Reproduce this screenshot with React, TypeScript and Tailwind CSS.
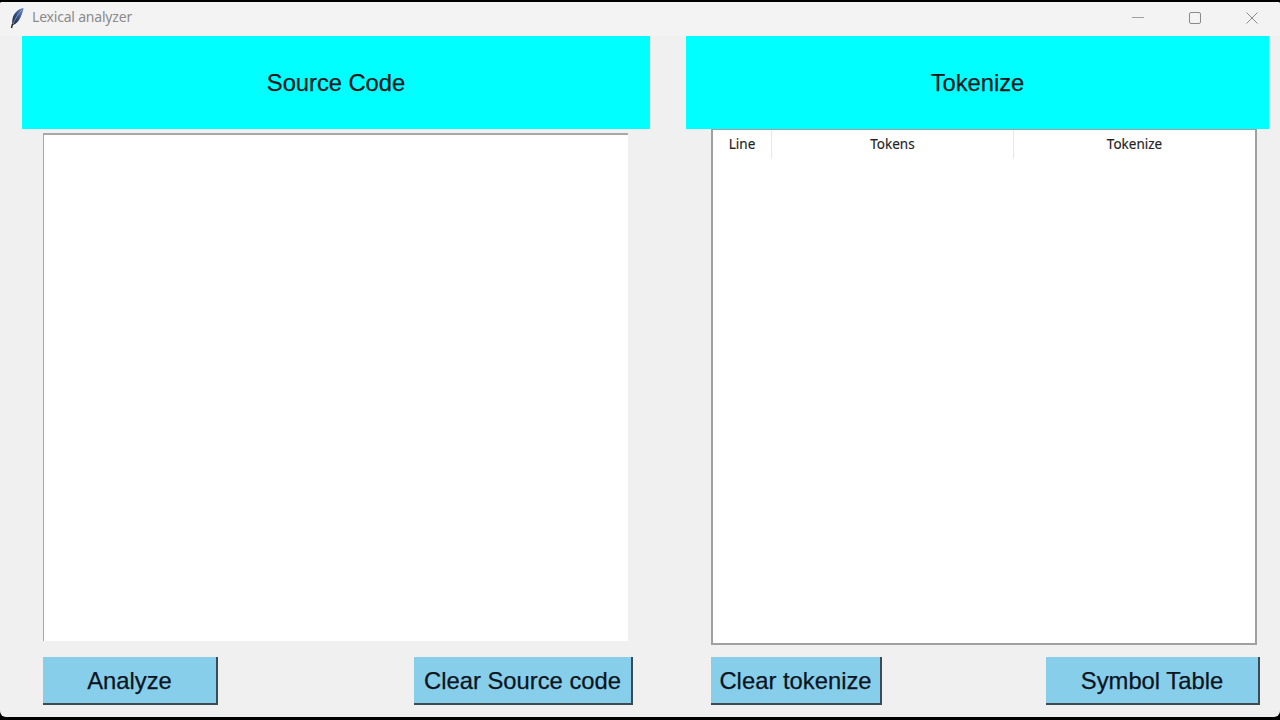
export default function App() {
  const btn =
    "h-[48px] pt-[2px] bg-[#87ceeb] border-b-2 border-r-2 border-[#3c4a54] text-[23.8px] leading-none text-[#0c1420] [-webkit-text-stroke:0.25px_#0c1420] font-['Liberation_Sans',Arial,sans-serif] flex items-center justify-center";
  const head =
    "h-[93px] pt-[2px] bg-[#00ffff] flex items-center justify-center text-[23.7px] text-[#10181c] [-webkit-text-stroke:0.25px_#10181c] font-['Liberation_Sans',Arial,sans-serif]";
  const th = "h-[29px] flex items-center justify-center text-[13.5px] text-[#222] [-webkit-text-stroke:0.15px_#222] font-['Noto_Sans','Open_Sans',sans-serif]";
  return (
    <div className="w-[1280px] h-[720px] bg-black pt-[2px] pb-[3px] overflow-hidden">
      <div className="h-[715px] bg-[#f0f0f0] rounded-b-[6px] rounded-t-[2px] overflow-hidden flex flex-col">
        <div className="h-[34px] bg-[#f3f3f3] flex items-start pt-[5px] shrink-0">
          <svg width="16" height="22" viewBox="0 0 16 22" className="ml-[9px]">
            <defs>
              <linearGradient id="feather" x1="1" y1="0" x2="0" y2="1">
                <stop offset="0" stopColor="#6f8cc4" />
                <stop offset="0.55" stopColor="#2f4a80" />
                <stop offset="1" stopColor="#1a2238" />
              </linearGradient>
            </defs>
            <path d="M14.5 1 C9 2 4.5 6 3.5 12 C3 15 3.2 17 3.5 18 C7 17.5 11 13 12.5 8 C13.5 5 14.5 3 14.5 1 Z" fill="url(#feather)" />
            <path d="M13 3 C9 7 6 12 4 17" stroke="#a9b7d2" strokeWidth="0.7" fill="none" />
            <path d="M3.5 17 L2.5 21" stroke="#222" strokeWidth="1.4" fill="none" />
          </svg>
          <span className="ml-[7px] text-[14px] leading-[20px] text-[#8b8b8b] font-['Noto_Sans','Open_Sans',sans-serif] tracking-[-0.2px]">Lexical analyzer</span>
          <div className="ml-auto flex items-center pt-[5px]">
            <svg width="12" height="12" viewBox="0 0 12 12" className="mr-[45px]">
              <path d="M0 5.5 H12" stroke="#a0a0a0" strokeWidth="1" />
            </svg>
            <svg width="12" height="12" viewBox="0 0 12 12" className="mr-[45px]">
              <rect x="0.5" y="0.5" width="11" height="11" rx="1.5" fill="none" stroke="#8a8a8a" strokeWidth="1" />
            </svg>
            <svg width="12" height="12" viewBox="0 0 12 12" className="mr-[22px]">
              <path d="M0.5 0.5 L11.5 11.5 M11.5 0.5 L0.5 11.5" stroke="#8a8a8a" strokeWidth="1" />
            </svg>
          </div>
        </div>
        <div className="flex pl-[22px] gap-[36px]">
          <div className="w-[628px] flex flex-col">
            <div className={head}>Source Code</div>
            <div className="mt-[4px] ml-[21px] w-[585px] h-[508px] bg-white border-t-2 border-l border-[#a8a8a8]" />
            <div className="mt-[16px] ml-[21px] w-[590px] flex justify-between">
              <div className={btn + " w-[175px]"}>Analyze</div>
              <div className={btn + " w-[219px]"}>Clear Source code</div>
            </div>
          </div>
          <div className="w-[583px] flex flex-col">
            <div className={head}>Tokenize</div>
            <div className="ml-[25px] w-[546px] h-[516px] bg-white border-2 border-t border-[#a0a0a0]">
              <div className="flex">
                <div className={th + " w-[59px] border-r border-[#e8e8e8]"}>Line</div>
                <div className={th + " w-[242px] border-r border-[#e8e8e8]"}>Tokens</div>
                <div className={th + " flex-1"}>Tokenize</div>
              </div>
            </div>
            <div className="mt-[12px] ml-[25px] w-[549px] flex justify-between">
              <div className={btn + " w-[171px]"}>Clear tokenize</div>
              <div className={btn + " w-[214px]"}>Symbol Table</div>
            </div>
          </div>
        </div>
      </div>
    </div>
  );
}
